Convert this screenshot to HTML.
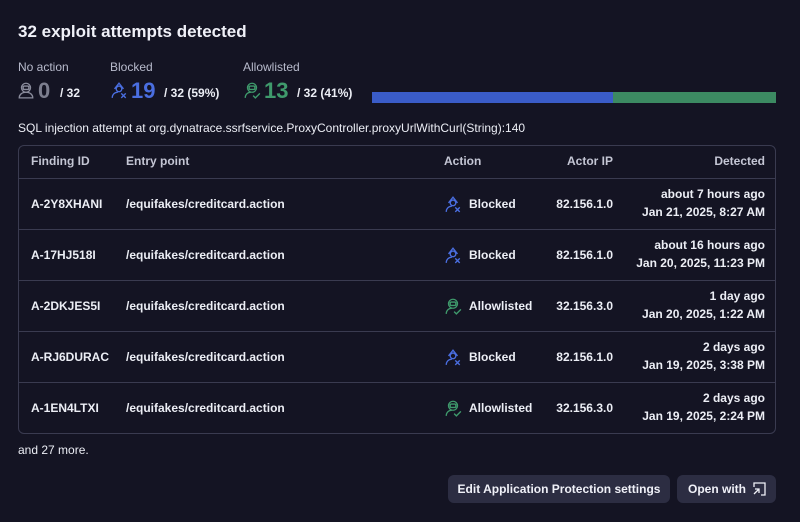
<!DOCTYPE html>
<html><head><style>
*{box-sizing:border-box;margin:0;padding:0}
body{width:800px;height:522px;background:#141423;font-family:"Liberation Sans",sans-serif;color:#eceef5;position:relative;overflow:hidden;font-size:12px}
.a{position:absolute;white-space:nowrap}
h1{position:absolute;left:18px;top:22px;font-size:17px;font-weight:bold;color:#f0f1f8}
.lbl{color:#b8bbcc;font-size:12px}
.num{font-size:22px;font-weight:bold}
.tbl{position:absolute;left:18px;top:145px;width:758px;height:289px;border:1px solid #3a3b50;border-radius:6px}
.row{position:absolute;left:0;width:756px;border-top:1px solid #3a3b50}
.b{font-weight:bold}
.btn{position:absolute;top:475px;height:28px;background:#2c2d42;border-radius:6px;font-weight:bold;font-size:12px;line-height:28px;text-align:center;color:#f0f1f8}
</style></head><body>
<h1>32 exploit attempts detected</h1>
<div class="a lbl" style="left:18px;top:60px">No action</div>
<div class="a lbl" style="left:110px;top:60px">Blocked</div>
<div class="a lbl" style="left:243px;top:60px">Allowlisted</div>
<svg class="a" style="left:17px;top:81px" width="18" height="18" viewBox="0 0 16 16" fill="none" stroke="#8a8c9c" stroke-width="1.2"><circle cx="8" cy="6" r="4"/><rect x="5.5" y="4.5" width="5" height="3" rx="1"/><path d="M2 15c0-3 2.5-5 6-5s6 2 6 5z"/></svg>
<div class="a num" style="left:38px;top:78px;color:#7c7e8e">0</div>
<div class="a b" style="left:60px;top:86px">/ 32</div>
<svg class="a" style="left:110px;top:81px" width="18" height="18" viewBox="0 0 16 16" fill="none" stroke="#4a6ee0" stroke-width="1.2"><path d="M4 7l4-5 4 5"/><circle cx="8" cy="7" r="2.5"/><path d="M2 15c0-3 2-5 5-5"/><path d="M10 11l4 4M14 11l-4 4"/></svg>
<div class="a num" style="left:131px;top:78px;color:#4a6ee0">19</div>
<div class="a b" style="left:164px;top:86px">/ 32 (59%)</div>
<svg class="a" style="left:243px;top:81px" width="18" height="18" viewBox="0 0 16 16" fill="none" stroke="#3f9a6c" stroke-width="1.2"><circle cx="8" cy="6" r="4"/><rect x="5.5" y="4.5" width="5" height="3" rx="1"/><path d="M2 15c0-3 2-5 5-5"/><path d="M9 13l2 2 4-4"/></svg>
<div class="a num" style="left:264px;top:78px;color:#3f9a6c">13</div>
<div class="a b" style="left:297px;top:86px">/ 32 (41%)</div>
<div class="a" style="left:372px;top:92px;width:241px;height:11px;background:#3a5cc8"></div>
<div class="a" style="left:613px;top:92px;width:163px;height:11px;background:#3c8a62"></div>
<div class="a" style="left:18px;top:121px">SQL injection attempt at org.dynatrace.ssrfservice.ProxyController.proxyUrlWithCurl(String):140</div>
<div class="tbl">
<div class="a b" style="left:12px;top:8px;color:#c4c6d4">Finding ID</div>
<div class="a b" style="left:107px;top:8px;color:#c4c6d4">Entry point</div>
<div class="a b" style="left:425px;top:8px;color:#c4c6d4">Action</div>
<div class="a b" style="right:162px;top:8px;color:#c4c6d4">Actor IP</div>
<div class="a b" style="right:10px;top:8px;color:#c4c6d4">Detected</div>
<div id="rows"></div>
</div>
<div class="a" style="left:18px;top:443px">and 27 more.</div>
<div class="btn" style="left:448px;width:222px">Edit Application Protection settings</div>
<div class="btn" style="left:677px;width:99px;text-align:left;padding-left:11px">Open with
<svg style="position:absolute;left:75px;top:7px" width="14" height="14" viewBox="0 0 14 14" fill="none" stroke="#f0f1f8" stroke-width="1.3"><path d="M2 5V1h11v12H9"/><path d="M2 12l5-5M3 7h4v4"/></svg></div>
<script>
var d=[["A-2Y8XHANI","b","82.156.1.0","about 7 hours ago","Jan 21, 2025, 8:27 AM"],["A-17HJ518I","b","82.156.1.0","about 16 hours ago","Jan 20, 2025, 11:23 PM"],["A-2DKJES5I","a","32.156.3.0","1 day ago","Jan 20, 2025, 1:22 AM"],["A-RJ6DURAC","b","82.156.1.0","2 days ago","Jan 19, 2025, 3:38 PM"],["A-1EN4LTXI","a","32.156.3.0","2 days ago","Jan 19, 2025, 2:24 PM"]];
var bi='<svg width="18" height="18" viewBox="0 0 16 16" fill="none" stroke="#4a6ee0" stroke-width="1.2"><path d="M4 7l4-5 4 5"/><circle cx="8" cy="7" r="2.5"/><path d="M2 15c0-3 2-5 5-5"/><path d="M10 11l4 4M14 11l-4 4"/></svg>';
var ai='<svg width="18" height="18" viewBox="0 0 16 16" fill="none" stroke="#3f9a6c" stroke-width="1.2"><circle cx="8" cy="6" r="4"/><rect x="5.5" y="4.5" width="5" height="3" rx="1"/><path d="M2 15c0-3 2-5 5-5"/><path d="M9 13l2 2 4-4"/></svg>';
var h='';d.forEach(function(r,i){var t=32+i*51;h+='<div class="row" style="top:'+t+'px;height:51px">'+
'<div class="a b" style="left:12px;top:18px">'+r[0]+'</div>'+
'<div class="a b" style="left:107px;top:18px">/equifakes/creditcard.action</div>'+
'<div class="a" style="left:425px;top:16px">'+(r[1]=="b"?bi:ai)+'</div>'+
'<div class="a b" style="left:450px;top:18px">'+(r[1]=="b"?"Blocked":"Allowlisted")+'</div>'+
'<div class="a b" style="right:162px;top:18px">'+r[2]+'</div>'+
'<div class="a b" style="right:10px;top:8px;text-align:right">'+r[3]+'</div>'+
'<div class="a b" style="right:10px;top:26px;text-align:right">'+r[4]+'</div></div>'});
document.getElementById('rows').innerHTML=h;
</script>
</body></html>
